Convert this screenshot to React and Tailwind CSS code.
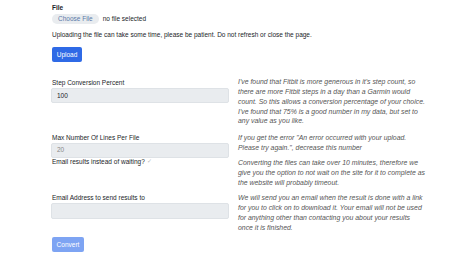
export default function App(){
  const font = {fontFamily:'"Liberation Sans", Arial, sans-serif'}
  return (
    <div className="w-[474px] h-[255px] bg-white text-[#212529] text-[6.5px] leading-[9.7px] overflow-hidden" style={font}>
      <div className="pl-[52px] pt-[3px]">
        <div className="font-bold">File</div>
        <div className="flex items-center gap-[4px] mt-[1px]">
          <span className="bg-[#e9ecef] rounded-[6px] px-[6px] h-[10px] flex items-center text-[#5b79a8]">Choose File</span>
          <span>no file selected</span>
        </div>
        <p className="mt-[6px]">Uploading the file can take some time, please be patient. Do not refresh or close the page.</p>
        <button className="mt-[8px] bg-[#2f6ae6] text-white rounded-[2px] w-[30px] h-[15px] flex items-center justify-center">Upload</button>
      </div>

      <div className="flex gap-[9px] pl-[51px] mt-[14px]">
        <div className="w-[178px] shrink-0">
          <div className="pl-[1px] mt-[2px]">Step Conversion Percent</div>
          <div className="bg-[#e9ecef] border border-[#dee2e6] rounded-[2px] h-[15px] flex items-center px-[5px]">100</div>
        </div>
        <div className="w-[187px] italic text-[#555] text-[6.9px] mt-[1px]">
          I've found that Fitbit is more generous in it's step count, so there are more Fitbit steps in a day than a Garmin would count. So this allows a conversion percentage of your choice. I've found that 75% is a good number in my data, but set to any value as you like.
        </div>
      </div>

      <div className="flex gap-[9px] pl-[51px] mt-[7px]">
        <div className="w-[178px] shrink-0">
          <div className="pl-[1px]">Max Number Of Lines Per File</div>
          <div className="bg-[#e9ecef] border border-[#dee2e6] rounded-[2px] h-[15px] flex items-center px-[5px] text-[#888]">20</div>
          <div className="pl-[1px] mt-[-0.5px] flex items-center gap-[2px]">Email results instead of waiting? <span className="text-[#bbb] text-[6px]">✓</span></div>
        </div>
        <div className="w-[187px] italic text-[#555] text-[6.9px]">
          <p>If you get the error "An error occurred with your upload. Please try again.", decrease this number</p>
          <p className="mt-[6px]">Converting the files can take over 10 minutes, therefore we give you the option to not wait on the site for it to complete as the website will probably timeout.</p>
        </div>
      </div>

      <div className="flex gap-[9px] pl-[51px] mt-[6px]">
        <div className="w-[178px] shrink-0">
          <div className="pl-[1px]">Email Address to send results to</div>
          <div className="bg-[#e9ecef] border border-[#dee2e6] rounded-[2px] h-[16px]"></div>
        </div>
        <div className="w-[187px] italic text-[#555] text-[6.9px]">
          We will send you an email when the result is done with a link for you to click on to download it. Your email will not be used for anything other than contacting you about your results once it is finished.
        </div>
      </div>

      <div className="pl-[52px] mt-[5px]">
        <button className="bg-[#7ea4f3] text-white rounded-[2px] w-[32px] h-[15px] flex items-center justify-center">Convert</button>
      </div>
    </div>
  )
}
